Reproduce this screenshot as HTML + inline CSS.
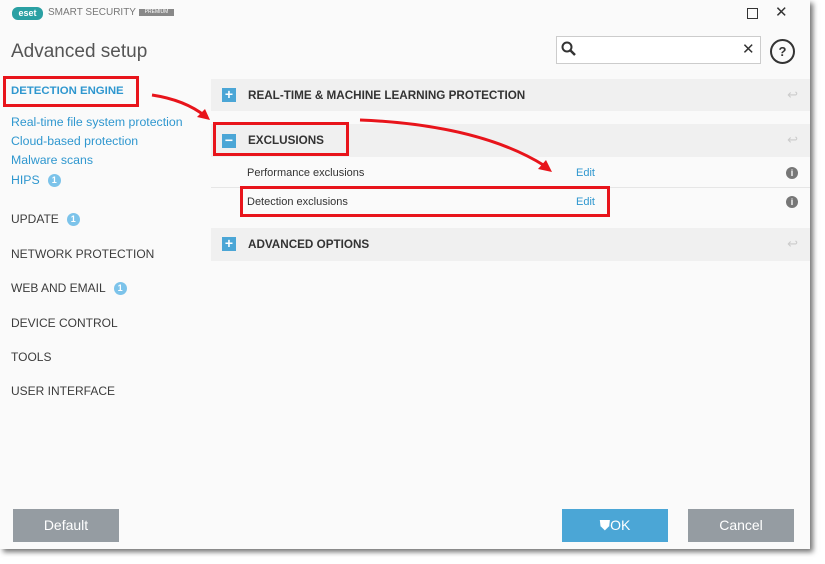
<!DOCTYPE html>
<html><head><style>
body{margin:0;width:825px;height:564px;background:#fff;font-family:"Liberation Sans",sans-serif;position:relative;overflow:hidden}
.win{position:absolute;left:0;top:0;width:810px;height:549px;background:#fafafa;box-shadow:3px 3px 5px rgba(0,0,0,.55)}
.a{position:absolute}
.nav{position:absolute;left:11px;font-size:12px;color:#3c3c3c}
.link{color:#2f97cf;font-size:12.3px}
.badge{display:inline-block;width:13px;height:13px;border-radius:50%;background:#7cc3ea;color:#fff;font-size:9px;text-align:center;line-height:13px;margin-left:8px;vertical-align:1px;font-weight:bold}
.row{position:absolute;left:211px;width:599px;background:#f0f0f0}
.hd{font-weight:bold;font-size:11.7px;color:#333;position:absolute;left:37px}
.pm{position:absolute;left:11px;width:14px;height:14px;background:#4ba6d6;color:#fff;font-weight:bold;font-size:14px;line-height:13px;text-align:center}
.undo{position:absolute;right:12px;color:#ccc;font-size:13px}
.red{position:absolute;border:3px solid #e8141b;box-sizing:border-box}
.btn{position:absolute;top:509px;height:33px;width:106px;color:#fff;font-size:14px;text-align:center;line-height:33px}
.info{position:absolute;left:575px;width:12px;height:12px;border-radius:50%;background:#777;color:#fff;font-size:9px;text-align:center;line-height:12px;font-weight:bold}
</style></head><body>
<div class="win">
<div class="a" style="left:12px;top:7px;width:29px;height:11px;border:1.5px solid #2aa0a3;border-radius:6px;background:#2aa0a3;color:#fff;font-size:9px;font-weight:bold;line-height:11px;text-align:center">eset</div>
<div class="a" style="left:48px;top:7px;font-size:10px;color:#777">SMART SECURITY</div>
<div class="a" style="left:139px;top:9px;width:35px;height:7px;background:#888;color:#fff;font-size:5px;line-height:7px;text-align:center">PREMIUM</div>
<div class="a" style="left:747px;top:8px;width:9px;height:9px;border:1.3px solid #333"></div>
<div class="a" style="left:775px;top:3px;font-size:15px;color:#333">✕</div>
<div class="a" style="left:11px;top:41px;font-size:19px;color:#555">Advanced setup</div>
<div class="a" style="left:556px;top:36px;width:205px;height:28px;border:1px solid #ccc;background:#fff;box-sizing:border-box"></div>
<svg class="a" style="left:561px;top:41px" width="16" height="16"><circle cx="6" cy="6" r="4.5" fill="none" stroke="#333" stroke-width="2"/><line x1="9" y1="9" x2="14" y2="14" stroke="#333" stroke-width="2.5"/></svg>
<div class="a" style="left:742px;top:40px;font-size:15px;color:#333">✕</div>
<div class="a" style="left:770px;top:39px;width:21px;height:21px;border:2px solid #333;border-radius:50%;text-align:center;line-height:21px;font-weight:bold;font-size:13px;color:#333">?</div>

<div class="nav" style="top:85px;color:#2f97cf;font-weight:bold;font-size:11.4px">DETECTION ENGINE</div>
<div class="nav link" style="top:115px">Real-time file system protection</div>
<div class="nav link" style="top:134px">Cloud-based protection</div>
<div class="nav link" style="top:153px">Malware scans</div>
<div class="nav link" style="top:173px">HIPS<span class="badge">1</span></div>
<div class="nav" style="top:212px">UPDATE<span class="badge">1</span></div>
<div class="nav" style="top:247px">NETWORK PROTECTION</div>
<div class="nav" style="top:281px">WEB AND EMAIL<span class="badge">1</span></div>
<div class="nav" style="top:316px">DEVICE CONTROL</div>
<div class="nav" style="top:350px">TOOLS</div>
<div class="nav" style="top:384px">USER INTERFACE</div>

<div class="row" style="top:79px;height:32px"><div class="pm" style="top:9px">+</div><div class="hd" style="top:10px">REAL-TIME &amp; MACHINE LEARNING PROTECTION</div><div class="undo" style="top:8px">↩</div></div>
<div class="row" style="top:124px;height:33px"><div class="pm" style="top:10px">−</div><div class="hd" style="top:10px">EXCLUSIONS</div><div class="undo" style="top:8px">↩</div></div>
<div class="row" style="top:158px;height:58px;background:#fafafa">
<div class="a" style="left:36px;top:9px;font-size:11px;color:#333">Performance exclusions</div>
<div class="a" style="left:365px;top:9px;font-size:11px;color:#2f97cf">Edit</div>
<div class="info" style="top:9px">i</div>
<div class="a" style="left:0;top:29px;width:599px;border-top:1px solid #e6e6e6"></div>
<div class="a" style="left:36px;top:38px;font-size:11px;color:#333">Detection exclusions</div>
<div class="a" style="left:365px;top:38px;font-size:11px;color:#2f97cf">Edit</div>
<div class="info" style="top:38px">i</div>
</div>
<div class="row" style="top:228px;height:33px"><div class="pm" style="top:9px">+</div><div class="hd" style="top:10px">ADVANCED OPTIONS</div><div class="undo" style="top:8px">↩</div></div>

<div class="red" style="left:3px;top:76px;width:136px;height:31px"></div>
<div class="red" style="left:213px;top:122px;width:136px;height:34px"></div>
<div class="red" style="left:240px;top:186px;width:370px;height:31px"></div>
<svg class="a" style="left:0;top:0" width="810" height="300">
<path d="M152 95 Q185 100 205 116" fill="none" stroke="#e8141b" stroke-width="3"/>
<polygon points="210,120 197,117 205,109" fill="#e8141b"/>
<path d="M360 120 Q480 125 545 166" fill="none" stroke="#e8141b" stroke-width="3"/>
<polygon points="552,172 538,169 546,160" fill="#e8141b"/>
</svg>

<div class="btn" style="left:13px;background:#959ca2">Default</div>
<div class="btn" style="left:562px;background:#4ba6d6">⛊OK</div>
<div class="btn" style="left:688px;background:#959ca2">Cancel</div>
</div>
</body></html>
